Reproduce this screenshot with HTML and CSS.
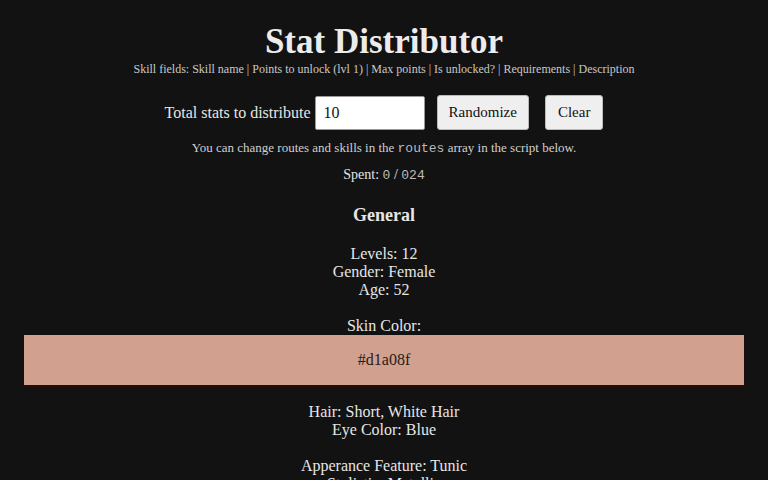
FILE: index.html
```html
<!DOCTYPE html>
<html lang="en">
<head>
  <meta charset="UTF-8">
  <meta name="viewport" content="width=device-width, initial-scale=1.0">
  <title>Stat Distributor</title>
  <link rel="stylesheet" href="styles.css">
</head>
<body>
  <!-- Header -->
  <h1 class="title">Stat Distributor</h1>
  <p class="fields">Skill fields: Skill name | Points to unlock (lvl 1) | Max points | Is unlocked? | Requirements | Description</p>

  <!-- Controls -->
  <div class="controls">
    <label for="total">Total stats to distribute</label>
    <input type="text" id="total" value="10">
    <button class="btn btn-random">Randomize</button>
    <button class="btn btn-clear">Clear</button>
  </div>
  <p class="note">You can change routes and skills in the <code>routes</code> array in the script below.</p>
  <p class="spent">Spent: <code>0</code> / <code>024</code></p>

  <!-- General info -->
  <section class="general">
    <h3>General</h3>
    <div class="group">
      <div>Levels: 12</div>
      <div>Gender: Female</div>
      <div>Age: 52</div>
    </div>
    <div class="group">
      <div>Skin Color:</div>
      <div class="swatch" style="background:#d1a08f">#d1a08f</div>
    </div>
    <div class="group">
      <div>Hair: Short, White Hair</div>
      <div>Eye Color: Blue</div>
    </div>
    <div class="group">
      <div>Apperance Feature: Tunic</div>
      <div>Stylistic: Metallic</div>
    </div>
  </section>
</body>
</html>
```

FILE: styles.css
```css
/* base */
* {
  box-sizing: border-box;
}
body {
  margin: 0;
  padding: 0 24px;
  background: #121212;
  color: #e6e6e6;
  font-family: "Liberation Serif", "Times New Roman", serif;
  text-align: center;
}
code {
  font-family: "Liberation Mono", "Courier New", monospace;
}

/* header */
.title {
  margin: 21px 0 0;
  font-size: 35px;
  line-height: 41px;
  color: #ececec;
}
.fields {
  margin: 0;
  font-size: 12px;
  line-height: 14px;
  color: #c8c8c8;
}

/* controls */
.controls {
  display: flex;
  justify-content: center;
  align-items: center;
  margin-top: 19px;
  font-size: 16px;
}
.controls label {
  margin-right: 4px;
}
.controls input {
  width: 110px;
  height: 34px;
  padding: 0 8px;
  border: 1px solid #999;
  border-radius: 2px;
  background: #fff;
  color: #111;
  font-family: "Liberation Serif", serif;
  font-size: 16px;
}
.btn {
  height: 35px;
  padding: 0 11px;
  background: #efefef;
  color: #111;
  border: 1px solid #bbb;
  border-radius: 3px;
  font-family: "Liberation Serif", serif;
  font-size: 15px;
}
.btn-random {
  margin-left: 12px;
}
.btn-clear {
  margin-left: 16px;
  padding: 0 12px;
}
.note {
  margin: 10px 0 0;
  font-size: 13px;
  line-height: 15px;
  color: #d0d0d0;
}
.note code {
  font-size: 13px;
  color: #bbb;
}
.spent {
  margin: 11px 0 0;
  font-size: 14px;
  line-height: 16px;
}
.spent code {
  font-size: 13px;
  color: #bbb;
}

/* general section */
.general h3 {
  margin: 21px 0 0;
  font-size: 18px;
  line-height: 21px;
}
.group {
  margin-top: 18px;
  font-size: 16px;
  line-height: 18px;
}
.general h3 + .group {
  margin-top: 19px;
}
.swatch {
  height: 50px;
  line-height: 50px;
  color: #2a1a14;
  box-shadow: 0 3px 4px rgba(60, 10, 0, 0.4);
}
```
